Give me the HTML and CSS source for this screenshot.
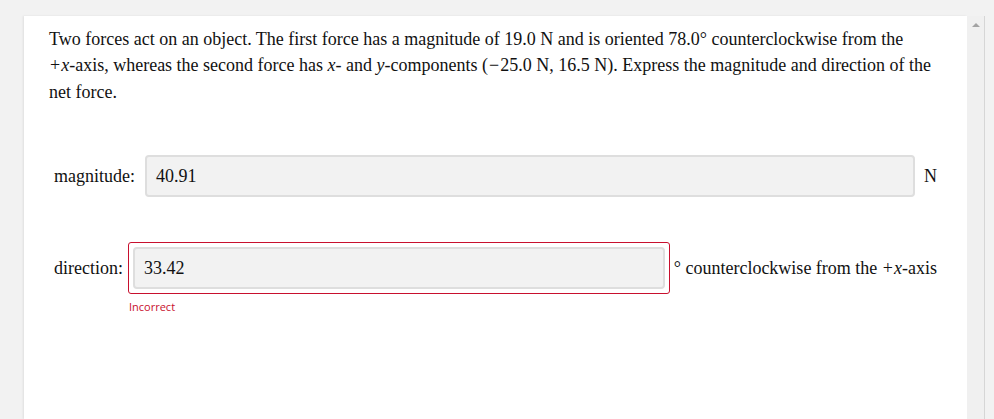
FILE: index.html
```html
<!DOCTYPE html>
<html lang="en">
<head>
<meta charset="utf-8">
<title>Net force question</title>
<link rel="stylesheet" href="styles.css">
</head>
<body>
<div class="frame">
  <main class="card">
    <p class="question">Two forces act on an object. The first force has a magnitude of 19.0&nbsp;N and is oriented 78.0° counterclockwise from the <span class="nw"><span class="op">+</span><i>x</i>-axis</span>, whereas the second force has <i>x</i>- and <i>y</i>-components (<span class="op">−</span>25.0&nbsp;N, 16.5&nbsp;N). Express the magnitude and direction of the net force.</p>
    <div class="answers">
      <div class="row">
        <span class="label">magnitude:</span>
        <div class="field">
          <div class="input">40.91</div>
        </div>
        <span class="unit">N</span>
      </div>
      <div class="row row-dir">
        <span class="label">direction:</span>
        <div class="field-col">
          <div class="field incorrect">
            <div class="input">33.42</div>
          </div>
          <div class="feedback">Incorrect</div>
        </div>
        <span class="unit">° counterclockwise from the <span class="op">+</span><i>x</i>-axis</span>
      </div>
    </div>
  </main>
  <div class="scrollbar"><span class="arrow"></span></div>
</div>
</body>
</html>
```
FILE: styles.css
```css
html, body {
  margin: 0;
  height: 100%;
  background: #f2f2f2;
  overflow: hidden;
}
.frame {
  display: flex;
  margin: 16px 0 0 24px;
  height: calc(100% - 16px);
}
.card {
  width: 893px;
  background: #fff;
  padding: 10px 25px 0 25px;
  box-shadow: -1px 0 2px rgba(0,0,0,0.08);
  font-family: "Liberation Serif", "Times New Roman", serif;
  font-size: 18px;
  color: #111;
}
.question {
  margin: 0;
  line-height: 26.4px;
}
.nw {
  white-space: nowrap;
}
.op {
  padding: 0 1px;
}
.answers {
  margin-top: 45px;
  display: flex;
  flex-direction: column;
  gap: 40px;
}
.row {
  display: flex;
  align-items: center;
  padding: 0 5px;
}
.row-dir {
  align-items: flex-start;
}
.row-dir .label, .row-dir .unit {
  line-height: 52px;
}
.label {
  margin-right: 5px;
}
.field {
  flex: 1;
  border: 1px solid transparent;
  border-radius: 3px;
  padding: 4px;
}
.field-col {
  flex: 1;
  display: flex;
  flex-direction: column;
}
.field.incorrect {
  border-color: #c8102e;
}
.input {
  box-sizing: border-box;
  height: 42px;
  border: 2px solid #dedede;
  border-radius: 4px;
  background: #f2f2f2;
  padding-left: 9px;
  display: flex;
  align-items: center;
}
.unit {
  margin-left: 4px;
  white-space: nowrap;
}
.feedback {
  font-family: "Open Sans", "Noto Sans", sans-serif;
  font-size: 11px;
  color: #c8102e;
  margin-top: 5px;
  padding-left: 1px;
}
.scrollbar {
  width: 17px;
  background: #f0f0f0;
  border-right: 1px solid #d6d6d6;
  position: relative;
}
.arrow {
  position: absolute;
  left: 5px;
  top: 7px;
  width: 0;
  height: 0;
  border-left: 4px solid transparent;
  border-right: 4px solid transparent;
  border-bottom: 4px solid #a3a3a3;
}
```
